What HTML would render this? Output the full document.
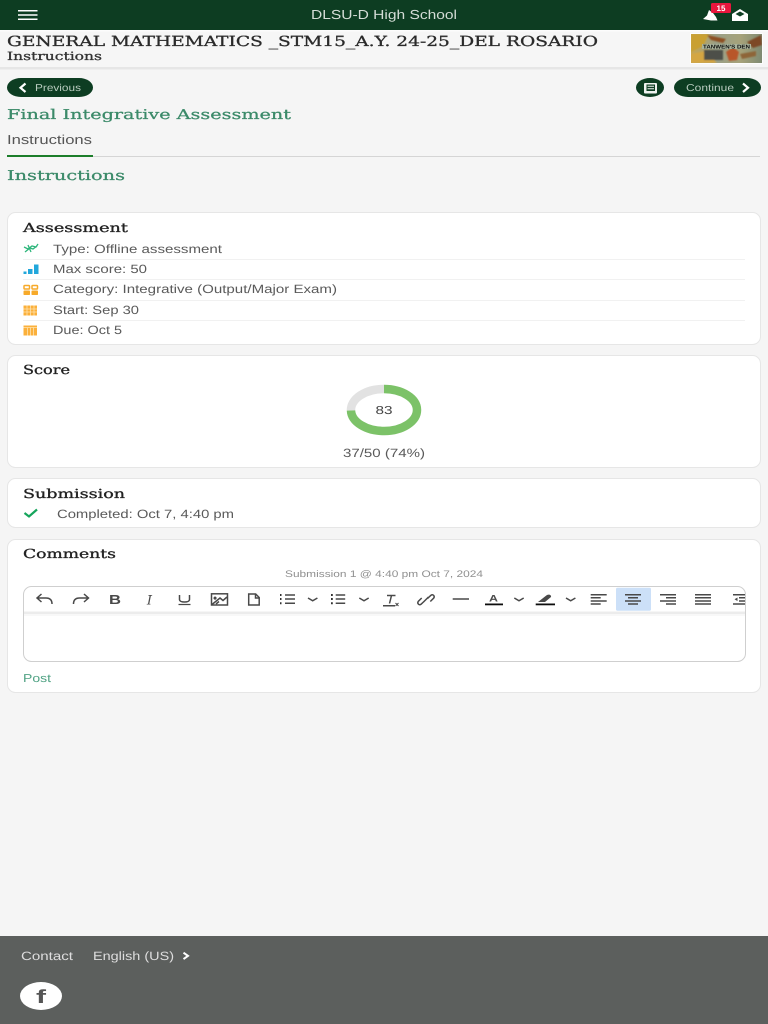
<!DOCTYPE html>
<html lang="en"><head><meta charset="utf-8"><title>Final Integrative Assessment</title>
<style>html,body{margin:0;padding:0;background:#f5f5f5}svg{display:block}
.s{font-family:"Liberation Sans",sans-serif}.r{font-family:"DejaVu Serif","Liberation Serif",serif}
.d{fill:#222;stroke:#222;stroke-width:.3}.g{fill:#3b8a69;stroke:#3b8a69;stroke-width:.25}
text{text-rendering:geometricPrecision}</style></head>
<body>
<svg width="768" height="1024" viewBox="0 0 768 1024" xmlns="http://www.w3.org/2000/svg">
<defs>
<filter id="b" x="0" y="0" width="100%" height="100%"><feGaussianBlur stdDeviation="0.35"/></filter>
<filter id="b2" x="-5%" y="-5%" width="110%" height="110%"><feGaussianBlur stdDeviation="0.8"/></filter>
<linearGradient id="tg" x1="0" y1="0" x2="1" y2="0"><stop offset="0" stop-color="#c8a650"/><stop offset=".35" stop-color="#9aa088"/><stop offset=".7" stop-color="#a6a27a"/><stop offset="1" stop-color="#7e8a72"/></linearGradient>
<clipPath id="ed"><rect x="23" y="586" width="722" height="76" rx="8"/></clipPath>
<clipPath id="th"><rect x="691" y="34" width="71" height="29"/></clipPath>
</defs>
<g filter="url(#b)">
<rect width="768" height="1024" fill="#f5f5f5"/>
<!-- top bar -->
<rect width="768" height="30" fill="#0b3d20"/>
<path d="M18 10.700h19.500M18 15h19.500M18 19.300h19.500" stroke="#fff" stroke-width="1.500"/>
<text class="s" x="311" y="19" font-size="13" fill="#d4dcd6" textLength="146" lengthAdjust="spacingAndGlyphs">DLSU-D High School</text>
<path d="M703 19L707 15.500 709 10 713 13 716 17 717.500 20.500 711 20.500Z" fill="#fff"/>
<rect x="711" y="3" width="20" height="10" rx="1.500" fill="#e8173c"/>
<text class="s" x="721" y="11" font-size="8" font-weight="700" fill="#fff" text-anchor="middle">15</text>
<path d="M732 14L740 9 748 14V21H732Z" fill="#fff"/>
<path d="M735.500 14L740 11.500 744.500 14 740 16.500Z" fill="#0b3d20"/>
<!-- header -->
<rect y="66" width="768" height="3.500" fill="#e6e6e6"/>
<rect y="30" width="768" height="37" fill="#f6f6f6"/>
<rect y="30" width="768" height="1.500" fill="#fcfcfc"/>
<text class="r d" x="7" y="46" font-size="14" style="fill:#2c2c2c;stroke:#2c2c2c" textLength="591" lengthAdjust="spacingAndGlyphs">GENERAL MATHEMATICS _STM15_A.Y. 24-25_DEL ROSARIO</text>
<text class="r d" x="7" y="60" font-size="11.500" style="fill:#333;stroke:#333" textLength="95" lengthAdjust="spacingAndGlyphs">Instructions</text>
<rect x="690" y="33" width="73" height="31" fill="#fdfdfd"/>
<g clip-path="url(#th)">
<rect x="691" y="34" width="71" height="29" fill="url(#tg)"/>
<g filter="url(#b2)">
<path d="M691 34h18l-6 12-12 6z" fill="#c9a030"/>
<path d="M691 54l14-3 12 12H691z" fill="#d4a643"/>
<path d="M707 35l19 4-3 4-12-3z" fill="#8d4f22"/>
<path d="M747 42l14-7 1 10-9 3z" fill="#7d4a26"/>
<path d="M704 50h19v10h-19z" fill="#4d4f48"/>
<path d="M726 52l7-5 6 5-2 8-8 1z" fill="#b8572a"/>
<path d="M740 54l16-3v5l-14 3z" fill="#8e6538"/>
</g>
<rect x="702" y="44" width="49" height="5" fill="#a9b39b"/>
<text class="s" x="703" y="48.500" font-size="5.500" font-weight="700" fill="#111" textLength="47" lengthAdjust="spacingAndGlyphs">TANWEN'S DEN</text>
</g>
<!-- nav buttons -->
<rect x="7" y="78" width="86" height="19" rx="14" ry="9.500" fill="#0b3d20"/>
<path d="M25.500 83.500L20.500 87.800l5 4.200" fill="none" stroke="#fff" stroke-width="2.200"/>
<text class="s" x="35" y="91" font-size="10" fill="#b9cbbf" textLength="46" lengthAdjust="spacingAndGlyphs">Previous</text>
<ellipse cx="650" cy="87.500" rx="14" ry="9.500" fill="#0b3d20"/>
<rect x="644" y="83" width="13" height="10.500" rx="1" fill="#eef2ef"/>
<rect x="646.500" y="84.500" width="8.500" height="6.500" fill="#0b3d20"/>
<path d="M647.500 86.300h6.500M647.500 88.800h6.500" stroke="#eef2ef" stroke-width="1"/>
<rect x="674" y="78" width="87" height="19" rx="14" ry="9.500" fill="#0b3d20"/>
<text class="s" x="686" y="91" font-size="10" fill="#b9cbbf" textLength="48" lengthAdjust="spacingAndGlyphs">Continue</text>
<path d="M743 83.500l5 4.300-5 4.200" fill="none" stroke="#fff" stroke-width="2.200"/>
<!-- titles -->
<text class="r g" x="7" y="119" font-size="13.500" textLength="284" lengthAdjust="spacingAndGlyphs">Final Integrative Assessment</text>
<text class="s" x="7" y="144" font-size="13" fill="#555" textLength="85" lengthAdjust="spacingAndGlyphs">Instructions</text>
<rect x="7" y="156" width="753" height="1" fill="#d5d5d5"/>
<rect x="7" y="155" width="86" height="2" fill="#1b7d2b"/>
<text class="r g" x="7" y="180" font-size="13.500" textLength="118" lengthAdjust="spacingAndGlyphs">Instructions</text>
<!-- card 1 -->
<rect x="7.500" y="212.500" width="753" height="132" rx="8" fill="#fff" stroke="#e6e6e6"/>
<text class="r d" x="23" y="232" font-size="12.500" textLength="105" lengthAdjust="spacingAndGlyphs">Assessment</text>
<path d="M23 259.500h722M23 279.500h722M23 300.500h722M23 320.500h722" stroke="#f1f1f1"/>
<g class="s" font-size="12" fill="#5a5a5a">
<text x="53" y="253" textLength="169" lengthAdjust="spacingAndGlyphs">Type: Offline assessment</text>
<text x="53" y="273" textLength="94" lengthAdjust="spacingAndGlyphs">Max score: 50</text>
<text x="53" y="293" textLength="284" lengthAdjust="spacingAndGlyphs">Category: Integrative (Output/Major Exam)</text>
<text x="53" y="314" textLength="86" lengthAdjust="spacingAndGlyphs">Start: Sep 30</text>
<text x="53" y="334" textLength="69" lengthAdjust="spacingAndGlyphs">Due: Oct 5</text>
</g>
<path d="M24 247l4 2 4-3 4 1 2-3M25 252l5-4 3 1 4-3M28 245l3 7" fill="none" stroke="#2fb67c" stroke-width="1.300"/>
<path d="M23.500 271.500h3v2.500h-3zM28 269h4.500v5H28zM34 264.500h4.500v9.500H34z" fill="#22a7db"/>
<g fill="none" stroke="#f7aa2c" stroke-width="1.500"><rect x="24" y="285.500" width="5.500" height="3.500" rx=".8"/><rect x="32" y="285.500" width="5.500" height="3.500" rx=".8"/></g>
<rect x="23.500" y="290.500" width="6.500" height="4.500" rx=".8" fill="#f7aa2c"/><rect x="31.500" y="290.500" width="6.500" height="4.500" rx=".8" fill="#f7aa2c"/>
<rect x="23.500" y="305.500" width="13.500" height="10" fill="#fbb03b"/>
<path d="M23.500 309h13.500M23.500 312h13.500M27 305.500v10M30.500 305.500v10M34 305.500v10" stroke="#ffe2ae" stroke-width=".8"/>
<rect x="23.500" y="325.500" width="13.500" height="10" fill="#fbb03b"/>
<path d="M23.500 327.500h13.500M27.500 327.500v8M30.500 327.500v8M33.500 327.500v8" stroke="#ffe2ae" stroke-width=".8"/>
<!-- card 2 -->
<rect x="7.500" y="355.500" width="753" height="112" rx="8" fill="#fff" stroke="#e6e6e6"/>
<text class="r d" x="23" y="374" font-size="12.500" textLength="47" lengthAdjust="spacingAndGlyphs">Score</text>
<path d="M351 410.500A33 21 0 0 1 384 389" fill="none" stroke="#e2e2e2" stroke-width="8.500"/>
<path d="M384 389A33 21 0 1 1 351 410.500" fill="none" stroke="#7cc268" stroke-width="8.500"/>
<text class="s" x="375.500" y="414" font-size="11.500" fill="#444" textLength="17" lengthAdjust="spacingAndGlyphs">83</text>
<text class="s" x="343" y="457" font-size="12" fill="#5a5a5a" textLength="82" lengthAdjust="spacingAndGlyphs">37/50 (74%)</text>
<!-- card 3 -->
<rect x="7.500" y="478.500" width="753" height="49" rx="8" fill="#fff" stroke="#e6e6e6"/>
<text class="r d" x="23" y="498" font-size="12.500" textLength="102" lengthAdjust="spacingAndGlyphs">Submission</text>
<path d="M24.500 513l4.500 3.500 8-7" fill="none" stroke="#17a55c" stroke-width="2.200"/>
<text class="s" x="57" y="518" font-size="12" fill="#5a5a5a" textLength="177" lengthAdjust="spacingAndGlyphs">Completed: Oct 7, 4:40 pm</text>
<!-- card 4 -->
<rect x="7.500" y="539.500" width="753" height="153" rx="8" fill="#fff" stroke="#e6e6e6"/>
<text class="r d" x="23" y="558" font-size="12.500" textLength="93" lengthAdjust="spacingAndGlyphs">Comments</text>
<text class="s" x="285" y="577" font-size="9.500" fill="#909090" textLength="198" lengthAdjust="spacingAndGlyphs">Submission 1 @ 4:40 pm Oct 7, 2024</text>
<!-- editor -->
<rect x="23" y="586" width="722" height="76" rx="8" fill="#fff"/>
<g clip-path="url(#ed)">
<rect x="23" y="611.500" width="722" height="2.500" fill="#ececec"/><rect x="23" y="614" width="722" height="2" fill="#f8f8f8"/>
<rect x="616" y="587.700" width="35" height="23" rx="1.500" fill="#cce0f8"/>
<g fill="none" stroke="#4a4a4a" stroke-width="1.500">
<path d="M41.500 594L37 598l4.500 4M37 598h9c4 0 6 2 6 6"/>
<path d="M84 594l4.500 4-4.500 4M88.500 598h-9c-4 0-6 2-6 6"/>
<path d="M179.500 595v4.500c0 1.500 2 2.500 5 2.500s5-1 5-2.500V595"/>
<rect x="211.500" y="593.800" width="16" height="11.200"/>
<path d="M212 604.500l8-6.500 3 2.500 4-3.500M216 604l3-2.500"/>
<path d="M248.700 594h7l3.500 3.500v7.500h-10.500z"/><path d="M255.500 594v4h4"/>
<path d="M285 595h10M285 599h10M285 603.300h10M335.700 595h9.500M335.700 599h9.500M335.700 603.300h9.500"/>
<path d="M308 598l4.700 2.800 4.700-2.800M359.300 598l4.700 2.800 4.700-2.800M514.300 598l4.700 2.800 4.700-2.800M566 598l4.700 2.800 4.700-2.800"/>
<path d="M424.500 601l-3.500 3.300c-2 1.300-4-.8-2.800-2.800l3.500-3.500M427.500 598.500l3.500-3.300c2-1.300 4 .8 2.800 2.800l-3.500 3.500M423.500 602l5-5"/>
<path d="M452.700 599H469"/>
<path d="M590.700 594.700h16M590.700 597.700h10M590.700 601h16M590.700 604h10"/>
<path d="M625 594.700h16M628 597.700h10M625 601h16M628 604h10"/>
<path d="M660 594.700h16M666 597.700h10M660 601h16M666 604h10"/>
<path d="M695 594.700h16M695 597.700h16M695 601h16M695 604h16"/>
<path d="M733 594.700h16M739 597.700h10M739 601h10M733 604h16"/>
<path d="M387 595.500h8.500M391.500 595.500l-2 8"/>
</g>
<path d="M178.500 604.500h12" stroke="#4a4a4a" stroke-width="1.300"/>
<path d="M383 605.700h12" stroke="#4a4a4a" stroke-width="1.500"/>
<path d="M395.500 603l3 3M398.500 603l-3 3" stroke="#4a4a4a" stroke-width="1"/>
<path d="M734.500 599.300l3-1.800v3.600z" fill="#4a4a4a"/>
<path d="M280 595h1.500M280 599h1.500M280 603.300h1.500M331 595h1.800M331 599h1.800M331 603.300h1.800" stroke="#333" stroke-width="2"/>
<text class="s" x="109" y="604" font-size="13" font-weight="700" fill="#4a4a4a" textLength="12" lengthAdjust="spacingAndGlyphs">B</text>
<text class="r" x="149.500" y="604.500" font-size="13" font-style="italic" fill="#4a4a4a" text-anchor="middle">I</text>
<path d="M215 596.500a1.600 1.600 0 1 0 .1 0z" fill="#4a4a4a"/>
<text class="s" x="489" y="601.700" font-size="9.500" font-weight="700" fill="#4a4a4a" textLength="9" lengthAdjust="spacingAndGlyphs">A</text>
<rect x="485" y="603.500" width="18" height="1.800" fill="#111"/>
<path d="M538 602l7-5.500 2-1.500c2-1 4.500 0 4 2l-6 5z" fill="#4a4a4a"/>
<rect x="535.700" y="603.500" width="19.300" height="1.800" fill="#111"/>
</g>
<rect x="23.500" y="586.500" width="722" height="75" rx="8" fill="none" stroke="#cfcfcf"/>
<text class="s" x="23" y="682" font-size="11.500" fill="#4fa283" textLength="28" lengthAdjust="spacingAndGlyphs">Post</text>
<!-- footer -->
<rect y="936" width="768" height="88" fill="#5c5e5d"/>
<text class="s" x="21" y="960" font-size="12" fill="#dedede" textLength="52" lengthAdjust="spacingAndGlyphs">Contact</text>
<text class="s" x="93" y="960" font-size="12" fill="#dedede" textLength="81" lengthAdjust="spacingAndGlyphs">English (US)</text>
<path d="M183.500 952.700l4.500 3.200-4.500 3.200" fill="none" stroke="#fff" stroke-width="2"/>
<ellipse cx="41" cy="996" rx="21" ry="14" fill="#fff"/>
<text class="s" x="36" y="1003" font-size="19" font-weight="700" fill="#555" textLength="10" lengthAdjust="spacingAndGlyphs">f</text>
</g>
</svg>
</body></html>
